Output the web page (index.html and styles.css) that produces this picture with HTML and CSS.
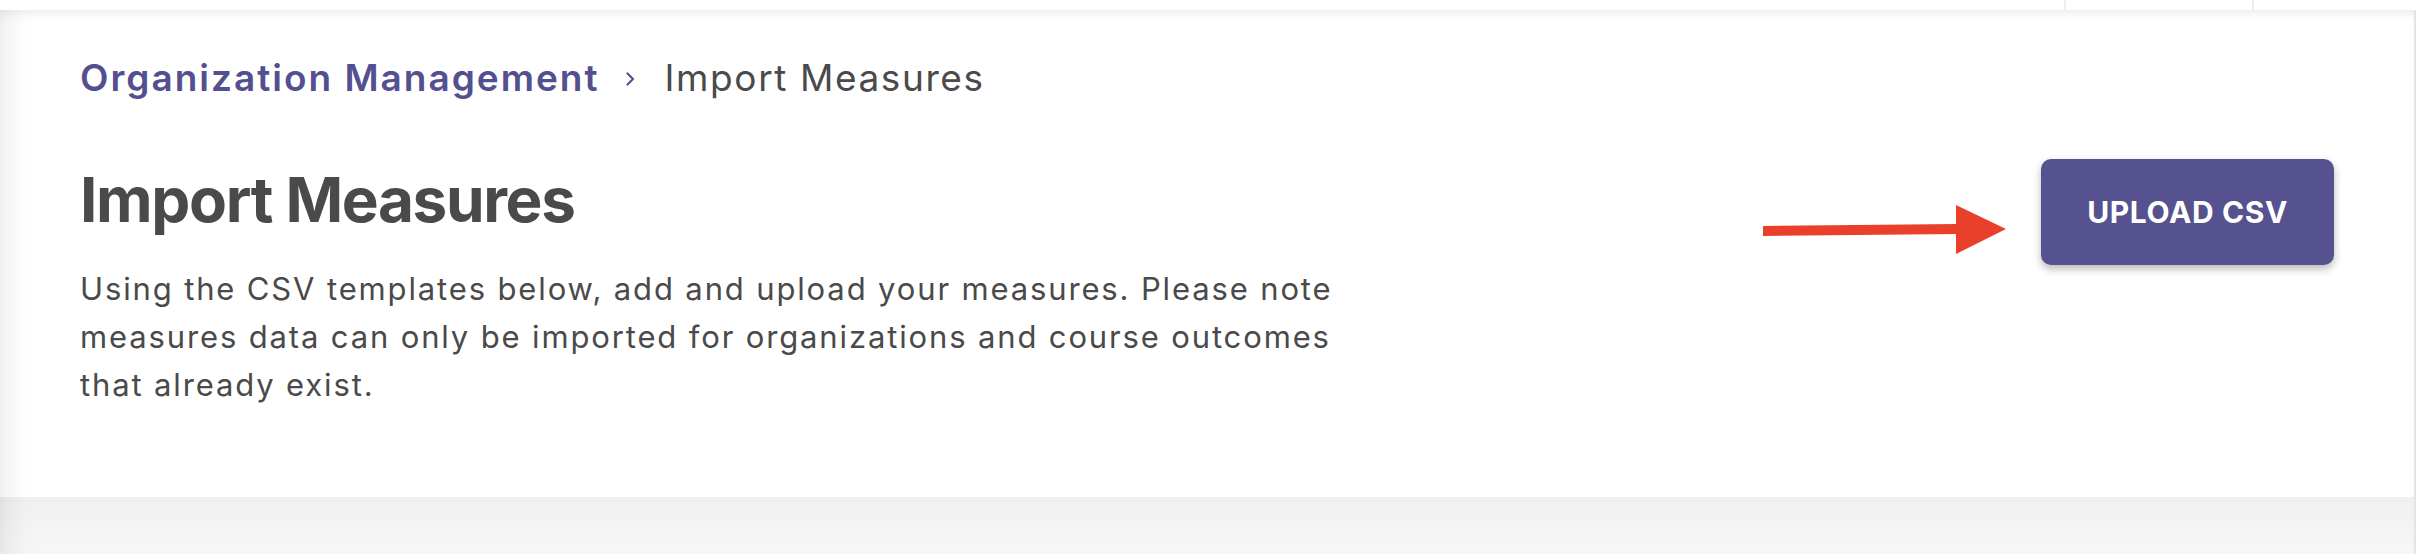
FILE: index.html
```html
<!DOCTYPE html>
<html lang="en">
<head>
<meta charset="utf-8">
<title>Import Measures</title>
<link rel="stylesheet" href="styles.css">
</head>
<body>
  <header class="topbar">
    <div class="topbar-item topbar-item-a"></div>
    <div class="topbar-item topbar-item-b"></div>
  </header>
  <main class="main">
    <section class="card">
      <nav class="breadcrumb">
        <a class="crumb-link" href="#">Organization Management</a>
        <svg class="crumb-sep" width="10" height="14" viewBox="0 0 10 14"><path d="M2.5 1.5 L8 7 L2.5 12.5" fill="none" stroke="#55528f" stroke-width="2.2" stroke-linecap="round" stroke-linejoin="round"/></svg>
        <span class="crumb-current">Import Measures</span>
      </nav>
      <div class="header-row">
        <div class="intro">
          <h1 class="title">Import Measures</h1>
          <p class="desc">Using the CSV templates below, add and upload your measures. Please note measures data can only be imported for organizations and course outcomes that already exist.</p>
        </div>
        <div class="action">
          <svg class="arrow" width="244" height="51" viewBox="0 0 244 51"><polygon points="0,22 195,20 195,30 0,32" fill="#e8402a"/><polygon points="193,1 243,25 193,50" fill="#e8402a"/></svg>
          <button class="upload-btn" type="button">UPLOAD CSV</button>
        </div>
      </div>
    </section>
    <div class="footer-band"></div>
  </main>
</body>
</html>
```
FILE: styles.css
```css
html, body {
  margin: 0;
  padding: 0;
  background: #ffffff;
}

body {
  font-family: "Inter", "Noto Sans", sans-serif;
  color: #4a4a4a;
  width: 2416px;
  height: 554px;
  overflow: hidden;
}

.topbar {
  height: 10px;
  background: #ffffff;
  display: flex;
  justify-content: flex-end;
}

.topbar-item {
  height: 10px;
  border-left: 2px solid #eeeeee;
  box-sizing: border-box;
}

.topbar-item-a { width: 188px; }
.topbar-item-b { width: 164px; }

.main {
  position: relative;
  height: 544px;
  display: flex;
  flex-direction: column;
  border-right: 2px solid #e4e4e4;
  box-sizing: border-box;
}

.main::before {
  content: "";
  position: absolute;
  inset: 0;
  pointer-events: none;
  box-shadow: inset 0 8px 12px -6px rgba(0, 0, 0, 0.09),
              inset 30px 0 30px -22px rgba(0, 0, 0, 0.08);
  z-index: 2;
}

.card {
  background: #ffffff;
  padding: 46px 80px 88px 80px;
}

.breadcrumb {
  display: flex;
  align-items: center;
  height: 44px;
  font-size: 37px;
  line-height: 44px;
}

.crumb-link {
  color: #54508f;
  font-weight: 600;
  letter-spacing: 0.054em;
  text-decoration: none;
}

.crumb-sep {
  margin: 2px 30px 0 25px;
}

.crumb-current {
  color: #4a4a4a;
  font-weight: 400;
  letter-spacing: 0.043em;
}

.header-row {
  margin-top: 59px;
  display: flex;
  justify-content: space-between;
  align-items: flex-start;
}

.title {
  margin: 3px 0 0 0;
  font-size: 62px;
  line-height: 76px;
  font-weight: 700;
  letter-spacing: -0.022em;
  color: #4a4a4a;
}

.desc {
  margin: 27px 0 0 0;
  max-width: 1290px;
  font-size: 31px;
  line-height: 48px;
  letter-spacing: 0.06em;
  color: #4a4a4a;
}

.action {
  position: relative;
}

.arrow {
  position: absolute;
  left: -278px;
  top: 45px;
}

.upload-btn {
  height: 106px;
  padding: 0 46px;
  border: none;
  border-radius: 10px;
  background: #55528f;
  color: #ffffff;
  font-family: "Inter", "Noto Sans", sans-serif;
  font-size: 30px;
  font-weight: 700;
  letter-spacing: 0.02em;
  box-shadow: 0 4px 9px rgba(0, 0, 0, 0.28);
}

.footer-band {
  flex: 1;
  background: linear-gradient(#f0f0f0, #f7f7f7);
}
```
